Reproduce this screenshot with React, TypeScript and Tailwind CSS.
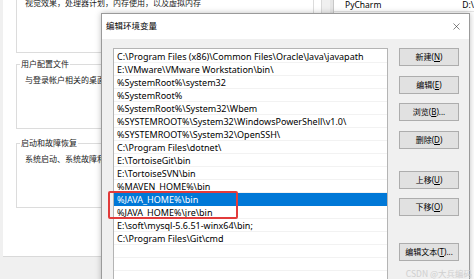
import { X } from 'lucide-react';

const paths = [
  'C:\\Program Files (x86)\\Common Files\\Oracle\\Java\\javapath',
  'E:\\VMware\\VMware Workstation\\bin\\',
  '%SystemRoot%\\system32',
  '%SystemRoot%',
  '%SystemRoot%\\System32\\Wbem',
  '%SYSTEMROOT%\\System32\\WindowsPowerShell\\v1.0\\',
  '%SYSTEMROOT%\\System32\\OpenSSH\\',
  'C:\\Program Files\\dotnet\\',
  'E:\\TortoiseGit\\bin',
  'E:\\TortoiseSVN\\bin',
  '%MAVEN_HOME%\\bin',
  '%JAVA_HOME%\\bin',
  '%JAVA_HOME%\\jre\\bin',
  'E:\\soft\\mysql-5.6.51-winx64\\bin;',
  'C:\\Program Files\\Git\\cmd',
  '',
  '',
  '',
];

const SELECTED = 11;

function Btn({ label, k, tail = '', className = '' }: { label: string; k: string; tail?: string; className?: string }) {
  return (
    <div
      className={`h-[18px] w-[60px] flex items-center justify-center bg-[#e1e1e1] border border-[#adadad] text-[8px] leading-none text-black ${className}`}
    >
      {label}(<span className="underline">{k}</span>){tail}
    </div>
  );
}

function GroupBox({ title, text, className = '' }: { title: string; text: string; className?: string }) {
  return (
    <fieldset className={`border border-[#dcdcdc] h-[71px] w-[298px] ${className}`}>
      <legend className="ml-[3px] px-[1px] text-[8px] leading-[12px] text-[#1a1a1a]">{title}</legend>
      <p className="pl-[8px] pt-[4px] text-[8px] leading-[12px] text-[#1a1a1a]">{text}</p>
    </fieldset>
  );
}

export default function App() {
  return (
    <div className="relative w-[474px] h-[279px] overflow-hidden bg-[#f0f0f0] font-['Noto_Sans','Noto_Sans_CJK_SC',sans-serif]">
      {/* windows behind the dialog */}
      <div className="flex h-full">
        {/* 系统属性 - 高级 */}
        <div className="w-[330px] h-full flex flex-col">
          <div className="ml-[3px] w-[319px] h-[257px] bg-white border-r border-b border-[#d9d9d9] pl-[13px] flex flex-col">
            <div className="mt-[-12px] h-[65px] w-[298px] border border-[#dcdcdc] pl-[8px] pt-[8px] text-[8px] leading-[12px] text-[#1a1a1a]">
              视觉效果，处理器计划，内存使用，以及虚拟内存
            </div>
            <GroupBox className="mt-[5px]" title="用户配置文件" text="与登录帐户相关的桌面设置" />
            <GroupBox className="mt-[8px]" title="启动和故障恢复" text="系统启动、系统故障和调试信息" />
          </div>
        </div>
        {/* 环境变量 */}
        <div className="flex-1 h-full flex">
          <div className="w-[3px] bg-[#e6e6e6]" />
          <div className="flex-1 bg-white border-l border-[#c8c8c8]">
            <div className="flex h-[12px] items-center text-[8.5px] leading-none text-black border-b border-[#e5e5e5]">
              <span className="ml-[11px]">PyCharm</span>
              <span className="ml-auto">D:\</span>
            </div>
          </div>
        </div>
      </div>

      {/* 编辑环境变量 dialog */}
      <div className="absolute left-[101px] top-[13px] w-[369px] h-[280px] bg-[#f0f0f0] border border-[#9a9a9a] shadow-[0_0_6px_rgba(0,0,0,0.25)] flex flex-col">
        <div className="h-[25px] bg-white flex items-center justify-between pl-[4px] pr-[7px]">
          <span className="text-[8.5px] leading-none text-black">编辑环境变量</span>
          <X className="w-[11px] h-[11px] text-[#333]" strokeWidth={1.3} />
        </div>
        <div className="flex pl-[11px] pt-[9px] gap-[11px]">
          <div className="w-[275px] h-[240px] bg-white border border-[#b4b4b4] pt-[1px]">
            {paths.map((p, i) => (
              <div
                key={i}
                className={`h-[13px] flex items-center pl-[3px] text-[9px] leading-none whitespace-nowrap border-b ${
                  i === SELECTED ? 'bg-[#0078d7] text-white border-[#0078d7]' : 'text-black border-[#f2f2f2]'
                }`}
              >
                {p}
              </div>
            ))}
          </div>
          <div className="flex flex-col">
            <Btn label="新建" k="N" />
            <Btn label="编辑" k="E" className="mt-[10px]" />
            <Btn label="浏览" k="B" tail="..." className="mt-[9px]" />
            <Btn label="删除" k="D" className="mt-[10px]" />
            <Btn label="上移" k="U" className="mt-[22px]" />
            <Btn label="下移" k="O" className="mt-[9px]" />
            <Btn label="编辑文本" k="T" tail="..." className="mt-[27px]" />
          </div>
        </div>
      </div>

      {/* annotation */}
      <div className="absolute left-[108px] top-[191px] w-[130px] h-[28px] border-2 border-[#e23b3b] rounded-[2px]" />

      {/* watermark */}
      <div className="absolute right-[2px] bottom-[2px] text-[8.5px] leading-none text-[#cfcfcf] font-['Noto_Sans_CJK_SC',sans-serif]">
        CSDN @大兵编码
      </div>
    </div>
  );
}
